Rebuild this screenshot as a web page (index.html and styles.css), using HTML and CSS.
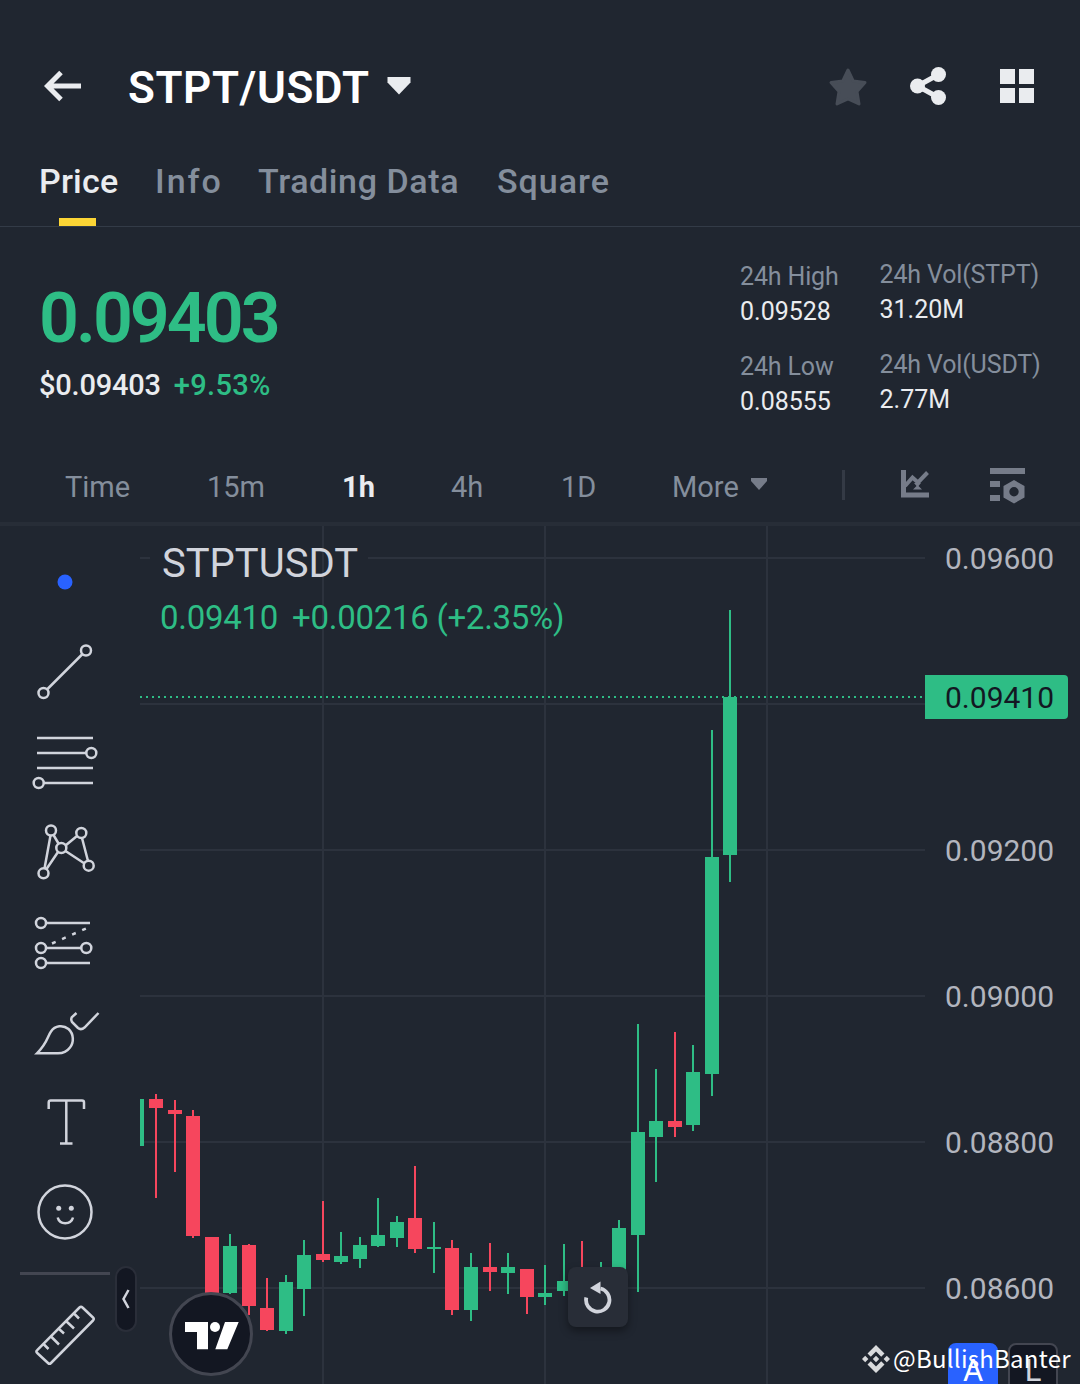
FILE: index.html
```html
<!DOCTYPE html>
<html lang="en">
<head>
  <meta charset="UTF-8" />
  <meta name="viewport" content="width=device-width, initial-scale=1.0"/>
  <title>STPT/USDT</title>
  <link rel="stylesheet" href="styles.css">
</head>
<body>
  <!-- Header -->
  <header class="topbar">
    <svg class="back" width="38" height="32" viewBox="0 0 38 32"><path d="M37 16H5M17 2.500L3.500 16L17 29.500" /></svg>
    <h1>STPT/USDT</h1>
    <svg class="caret" width="24" height="18" viewBox="0 0 24 18"><path d="M.5 0H23.500V5.500L12 17.500L.5 5.500Z" /></svg>
    <div class="actions">
      <svg class="star" width="40" height="40" viewBox="0 0 40 40"><path d="M20 3L25.200 14L37 15.500L29 24.500L31 37L20 32L9 37L11 24.500L3 15.500L14.800 14Z" /></svg>
      <svg class="share" width="38" height="40" viewBox="0 0 38 40">
        <path d="M29.500 8.500L8.500 20L29.500 31.500" />
        <circle cx="8.500" cy="20" r="7.500" /><circle cx="29.500" cy="8.500" r="7.500" /><circle cx="29.500" cy="31.500" r="7.500" />
      </svg>
      <svg class="apps" width="34" height="34" viewBox="0 0 34 34"><path d="M0 0H15V15H0ZM19 0H34V15H19ZM0 19H15V34H0ZM19 19H34V34H19Z" /></svg>
    </div>
  </header>

  <nav class="tabs">
    <a class="tab active">Price</a>
    <a class="tab info">Info</a>
    <a class="tab trading">Trading Data</a>
    <a class="tab square">Square</a>
  </nav>

  <!-- Ticker -->
  <section class="ticker">
    <div class="quote">
      <div class="last">0.09403</div>
      <div class="fiat"><span>$0.09403</span><span class="change">+9.53%</span></div>
    </div>
    <div class="stats">
      <dl>
        <dt>24h High</dt><dd>0.09528</dd>
        <dt>24h Low</dt><dd>0.08555</dd>
      </dl>
      <dl class="volume">
        <dt>24h Vol(STPT)</dt><dd>31.20M</dd>
        <dt>24h Vol(USDT)</dt><dd>2.77M</dd>
      </dl>
    </div>
  </section>

  <!-- Intervals -->
  <div class="intervals">
    <span class="i-time">Time</span>
    <span class="i-15m">15m</span>
    <span class="i-1h active">1h</span>
    <span class="i-4h">4h</span>
    <span class="i-1d">1D</span>
    <span class="i-more">More</span>
    <svg class="more-caret" width="16" height="12" viewBox="0 0 16 12"><path d="M0 0H16V3L8 12L0 3Z" /></svg>
    <i class="divider"></i>
    <svg class="line-icon" width="28" height="28" viewBox="0 0 28 28">
      <path class="stroke" d="M2.500 0V25H28" stroke-width="5" />
      <path class="stroke" d="M4 16L11.500 7.500L17 12.500L26.500 2.500" stroke-width="4" />
      <path d="M13 13H20L17.500 16L21 19.500H12L15.500 16Z" />
    </svg>
    <svg class="settings-icon" width="35" height="36" viewBox="0 0 35 36">
      <path fill-rule="evenodd" d="M0 0H35V6H0ZM0 13H10V19H0ZM0 27H10V33H0ZM24 12L34.500 18V29.500L24 35.500L13.500 29.500V18ZM24 19A4.700 4.700 0 1 0 24 28.400A4.700 4.700 0 1 0 24 19Z" />
    </svg>
  </div>

  <!-- Chart -->
  <main class="chart">
    <aside class="tools">
      <svg viewBox="0 0 90 90"><circle class="dot" cx="45" cy="45" r="7.500" /></svg>
      <svg viewBox="0 0 90 90"><path d="M27 62.500L62.500 27" /><circle cx="66" cy="23.500" r="5" /><circle cx="23.500" cy="66" r="5" /></svg>
      <svg viewBox="0 0 90 90"><path d="M17 21H73M17 36H66M17 51H73M24 66H73" /><circle cx="71.300" cy="36" r="5" /><circle cx="18.700" cy="66" r="5" /></svg>
      <svg viewBox="0 0 90 90">
        <path d="M30.500 28.500L24.500 61.500M33.500 28L38.500 36.500M45.500 38.500L57 29M62 31L68 54M45.500 44L64.500 56.500M38 45L26.500 62" />
        <circle cx="31" cy="23.500" r="5" /><circle cx="61.300" cy="26" r="5" /><circle cx="41.300" cy="41" r="5" /><circle cx="23.500" cy="66.300" r="5" /><circle cx="68.700" cy="58.700" r="5" />
      </svg>
      <svg viewBox="0 0 90 90">
        <path d="M26 26H70M26 51H61M26 66H70" /><path d="M32 46.500L66 31.500" stroke-dasharray="4 7" />
        <circle cx="21" cy="26" r="5" /><circle cx="21" cy="51" r="5" /><circle cx="66.300" cy="51" r="5" /><circle cx="21" cy="66" r="5" />
      </svg>
      <svg viewBox="0 0 90 90"><path d="M17 66.300C28 55 27 50 31 44.500C35 38.500 43 37.500 48.500 42C54 47 54 55.500 50 60.500C47 64.500 43 66.300 38 66.300Z" /><path d="M56.500 26L52 30Q50.500 32 52 35L58 41Q61 43.500 64.500 40.500L78.500 26" /></svg>
      <svg viewBox="0 0 90 90"><path d="M28.700 32V25.500Q28.700 23.500 30.700 23.500H62Q64 23.500 64 25.500V32M46.300 23.500V66.500M40 66.500H52.500" /></svg>
      <svg viewBox="0 0 90 90"><circle cx="45" cy="45" r="26.500" /><circle class="eye" cx="38.700" cy="41.300" r="2.500" /><circle class="eye" cx="51.300" cy="41.300" r="2.500" /><path d="M37.700 50.500C39.500 58 51 58 53 50.500" /></svg>
      <hr>
      <svg class="ruler" viewBox="0 0 90 90"><path d="M17.200 60.200L59.500 17.500Q61 16 62.500 17.500L73 27.500Q74.500 29 73 30.500L31 73Q29.500 74.500 28 73L17.200 63Q15.500 61.500 17.200 60.200ZM23.500 54L28.500 59M31 46.500L39 54.500M38.500 38.500L44 43.500M46 31L54 38.500M54 23.500L59 28.500" /></svg>
      <div class="collapse"><svg width="8" height="20" viewBox="0 0 8 20"><path d="M6.500 1L1.500 10L6.500 19" /></svg></div>
    </aside>

    <div class="plot">
      <svg class="candles" width="785" height="858" viewBox="140 526 785 858">
        <path class="grid" d="M140 558H150M368 558H925M140 704H925M140 850H925M140 996H925M140 1142H925M140 1288H925M323 526V1384M545 526V1384M767 526V1384" />
        <path class="last-line" d="M140 697H925" />
        <path class="down wick" d="M156 1094V1198M175 1100V1172M193 1110V1238M249 1244V1315M267 1278V1331M323 1201V1262M415 1166V1253M452 1240V1315M490 1243V1291M527 1269V1314M582 1241V1290M675 1032V1137" />
        <path class="up wick" d="M230 1234V1294M286 1275V1334M304 1240V1316M341 1232V1264M360 1237V1268M378 1198V1247M397 1216V1247M434 1222V1273M471 1253V1321M508 1253V1294M545 1265V1305M564 1244V1296M601 1262V1290M619 1220V1290M638 1024V1292M656 1069V1182M693 1045V1131M712 730V1096M730 610V882" />
        <path class="down body" d="M156 1099V1108M175 1110V1114M193 1116V1236M212 1237V1300M249 1245V1306M267 1308V1330M323 1254V1260M415 1218V1249M452 1248V1310M490 1267V1272M527 1269V1297M675 1121V1127" />
        <path class="up body" d="M137 1099V1146M230 1246V1293M286 1282V1331M304 1255V1289M341 1256V1262M360 1245V1259M378 1235V1246M397 1222V1238M434 1247V1249M471 1267V1310M508 1267V1273M545 1293V1297M564 1281V1291M619 1228V1280M638 1132V1235M656 1121V1137M693 1072V1125M712 857V1074M730 697V855" />
      </svg>
      <div class="legend">
        <div class="symbol">STPTUSDT</div>
        <div class="values"><span>0.09410</span><span>+0.00216 (+2.35%)</span></div>
      </div>
      <svg class="tv-logo" width="84" height="84" viewBox="0 0 84 84">
        <circle class="ring" cx="42" cy="42" r="40.500" />
        <path d="M16 30H39V57.300H28V40H16ZM56 30H69.700L58.300 57.300H46.300Z" /><circle cx="46" cy="35" r="5" />
      </svg>
      <div class="reset"><svg width="30" height="34" viewBox="0 0 30 34"><path class="arc" d="M3.300 17.500A11.700 11.700 0 1 0 17.500 8.500" /><path d="M7 8L17.500 1.500V14Z" /></svg></div>
    </div>

    <div class="axis">
      <span>0.09600</span>
      <span class="tag">0.09410</span>
      <span>0.09200</span>
      <span>0.09000</span>
      <span>0.08800</span>
      <span>0.08600</span>
      <div class="scale"><b class="auto">A</b><b>L</b></div>
    </div>

    <div class="watermark">
      <svg width="28" height="28" viewBox="0 0 28 28"><path d="M14 0L22.500 8.500L19.200 11.800L14 6.600L8.800 11.800L5.500 8.500ZM14 28L5.500 19.500L8.800 16.200L14 21.400L19.200 16.200L22.500 19.500ZM14 10.800L17.200 14L14 17.200L10.800 14ZM3.200 10.800L6.400 14L3.200 17.200L0 14ZM24.800 10.800L28 14L24.800 17.200L21.600 14Z" /></svg>
      <span>@BullishBanter</span>
    </div>
  </main>
</body>
</html>
```
FILE: styles.css
```css
* {
  margin: 0;
  padding: 0;
  box-sizing: border-box;
}

body {
  width: 1080px;
  height: 1384px;
  overflow: hidden;
  font-family: Roboto, "Liberation Sans", sans-serif;
  background: #202630;
  color: #eaecef;
}

svg {
  display: block;
  flex: none;
}

/* Header */
.topbar {
  display: flex;
  align-items: center;
  height: 124px;
  padding: 50px 46px 0 44px;
}

.back {
  margin-top: -2px;
}

.back path {
  fill: none;
  stroke: #eaecef;
  stroke-width: 5;
}

.topbar h1 {
  width: 243px;
  margin-left: 46px;
  padding-top: 2px;
  font-size: 44px;
  font-weight: 600;
  line-height: 52px;
  letter-spacing: 0.6px;
  color: #fff;
  white-space: nowrap;
}

.caret {
  margin: -3px 0 0 16px;
  fill: #eaecef;
}

.actions {
  display: flex;
  align-items: center;
  margin-left: auto;
  margin-top: -2px;
}

.star {
  margin-top: 2px;
  fill: #474d57;
  stroke: #474d57;
  stroke-width: 3;
  stroke-linejoin: round;
}

.share {
  margin-left: 41px;
  fill: #eaecef;
}

.share path {
  fill: none;
  stroke: #eaecef;
  stroke-width: 5;
}

.apps {
  margin-left: 53px;
  fill: #eaecef;
}

/* Tabs */
.tabs {
  display: flex;
  height: 103px;
  padding: 37px 0 0 39px;
  border-bottom: 1px solid #333b47;
}

.tab {
  position: relative;
  width: 116px;
  font-size: 34px;
  font-weight: 500;
  line-height: 40px;
  letter-spacing: 0.6px;
  color: #848e9c;
  white-space: nowrap;
}

.tab.active {
  letter-spacing: 0.2px;
  color: #eaecef;
}

.tab.active::after {
  content: "";
  position: absolute;
  left: 20px;
  top: 57px;
  width: 37px;
  height: 8px;
  background: #fcd535;
}

.tab.info {
  width: 103px;
  letter-spacing: 2px;
}

.tab.trading {
  width: 239px;
}

.tab.square {
  letter-spacing: 1px;
}

/* Ticker */
.ticker {
  display: flex;
  height: 223px;
  padding: 30px 0 0 39px;
}

.quote {
  width: 701px;
  padding-top: 26px;
}

.last {
  font-size: 70px;
  font-weight: 600;
  line-height: 70px;
  letter-spacing: -3px;
  color: #2ebd85;
}

.fiat {
  display: flex;
  gap: 13px;
  margin-top: 14px;
  font-size: 29px;
  font-weight: 500;
  line-height: 36px;
}

.fiat span {
  letter-spacing: -0.2px;
}

.fiat .change {
  letter-spacing: 0.3px;
  color: #2ebd85;
}

.stats {
  display: flex;
  font-size: 25px;
  line-height: 35px;
  white-space: nowrap;
}

.stats dl {
  width: 139.500px;
  padding-top: 2px;
}

.stats .volume {
  width: 180px;
  padding-top: 0;
}

.stats dt {
  letter-spacing: -0.15px;
  color: #848e9c;
}

.stats dd {
  margin-bottom: 20px;
}

/* Intervals */
.intervals {
  display: flex;
  align-items: center;
  height: 76px;
  padding: 0 0 4px 65px;
  border-bottom: 4px solid #272d37;
  font-size: 29px;
  line-height: 34px;
  color: #848e9c;
  fill: #767c89;
}

.intervals span {
  flex: none;
  padding-top: 5px;
}

.intervals .active {
  font-weight: 700;
  color: #eaecef;
}

.i-time {
  width: 142px;
}

.i-15m {
  width: 135px;
}

.i-1h {
  width: 109px;
}

.i-4h {
  width: 110px;
}

.i-1d {
  width: 111px;
}

.i-more {
  width: 79px;
}

.divider {
  width: 3px;
  height: 30px;
  margin: 2px 56px 0 75px;
  background: #343a45;
}

.stroke {
  fill: none;
  stroke: #767c89;
}

.settings-icon {
  margin: 3px 0 0 61px;
}

/* Chart */
.chart {
  position: relative;
  display: flex;
  height: 858px;
}

.tools {
  position: relative;
  width: 140px;
  padding: 11px 20px 0;
}

.tools svg {
  width: 90px;
  height: 90px;
  fill: none;
  stroke: #d1d4dc;
  stroke-width: 2.500;
}

.tools .dot {
  fill: #2962ff;
  stroke: none;
}

.tools .eye {
  fill: #d1d4dc;
  stroke: none;
}

.tools hr {
  width: 90px;
  height: 3px;
  margin: 15px 0;
  border: none;
  background: #434651;
}

.collapse {
  position: absolute;
  left: 115px;
  top: 740px;
  display: flex;
  align-items: center;
  justify-content: center;
  width: 22px;
  height: 66px;
  border: 2px solid #2a2e39;
  border-radius: 11px;
  background: #131722;
}

.tools .collapse svg {
  width: 8px;
  height: 20px;
}

.plot {
  position: relative;
  width: 785px;
}

.candles path {
  fill: none;
}

.grid {
  stroke: #2c323d;
  stroke-width: 2;
}

.last-line {
  stroke: #2ebd85;
  stroke-width: 2;
  stroke-dasharray: 2 4;
}

.up {
  stroke: #2ebd85;
}

.down {
  stroke: #f6465d;
}

.wick {
  stroke-width: 2;
}

.body {
  stroke-width: 14;
}

.legend {
  position: absolute;
  left: 21px;
  top: 13px;
  white-space: nowrap;
}

.symbol {
  padding-left: 1px;
  font-size: 40px;
  line-height: 50px;
  color: #d1d4dc;
}

.values {
  display: flex;
  gap: 14px;
  margin: 9px 0 0 -1px;
  font-size: 33px;
  line-height: 40px;
  letter-spacing: -0.28px;
  color: #2ebd85;
}

.tv-logo {
  position: absolute;
  left: 29px;
  top: 766px;
  fill: #fff;
}

.ring {
  fill: #131722;
  stroke: #434651;
  stroke-width: 3;
}

.reset {
  position: absolute;
  left: 428px;
  top: 741px;
  display: flex;
  align-items: center;
  justify-content: center;
  width: 60px;
  height: 60px;
  border-radius: 8px;
  background: #282d37;
  box-shadow: 0 4px 8px rgba(0, 0, 0, 0.4);
  fill: #d1d4dc;
}

.arc {
  fill: none;
  stroke: #d1d4dc;
  stroke-width: 3.800;
}

/* Price axis */
.axis {
  display: flex;
  flex-direction: column;
  gap: 102px;
  width: 155px;
  padding-top: 11px;
  font-size: 30px;
  line-height: 44px;
  color: #b2b5be;
}

.axis span {
  height: 44px;
  padding-left: 20px;
}

.axis .tag {
  width: 143px;
  margin: -8px 0 8px;
  border-radius: 0 4px 4px 0;
  background: #2ebd85;
  line-height: 46px;
  color: #131722;
}

.scale {
  display: flex;
  gap: 10px;
  margin: -70px 0 0 23px;
}

.scale b {
  width: 50px;
  height: 50px;
  border: 2px solid #434651;
  border-radius: 8px;
  background: #131722;
  font-size: 31px;
  font-weight: 400;
  line-height: 52px;
  text-align: center;
  color: #d1d4dc;
}

.scale .auto {
  border-color: #2962ff;
  background: #2962ff;
  color: #fff;
}

.watermark {
  position: absolute;
  left: 862px;
  top: 816px;
  display: flex;
  align-items: center;
  gap: 3px;
  font-family: "Noto Sans CJK SC", "Noto Sans", sans-serif;
  font-size: 24px;
  font-weight: 400;
  line-height: 36px;
  letter-spacing: 0.25px;
  color: #fff;
  fill: #d9dadc;
}

.watermark span {
  margin-top: -2px;
}
```
